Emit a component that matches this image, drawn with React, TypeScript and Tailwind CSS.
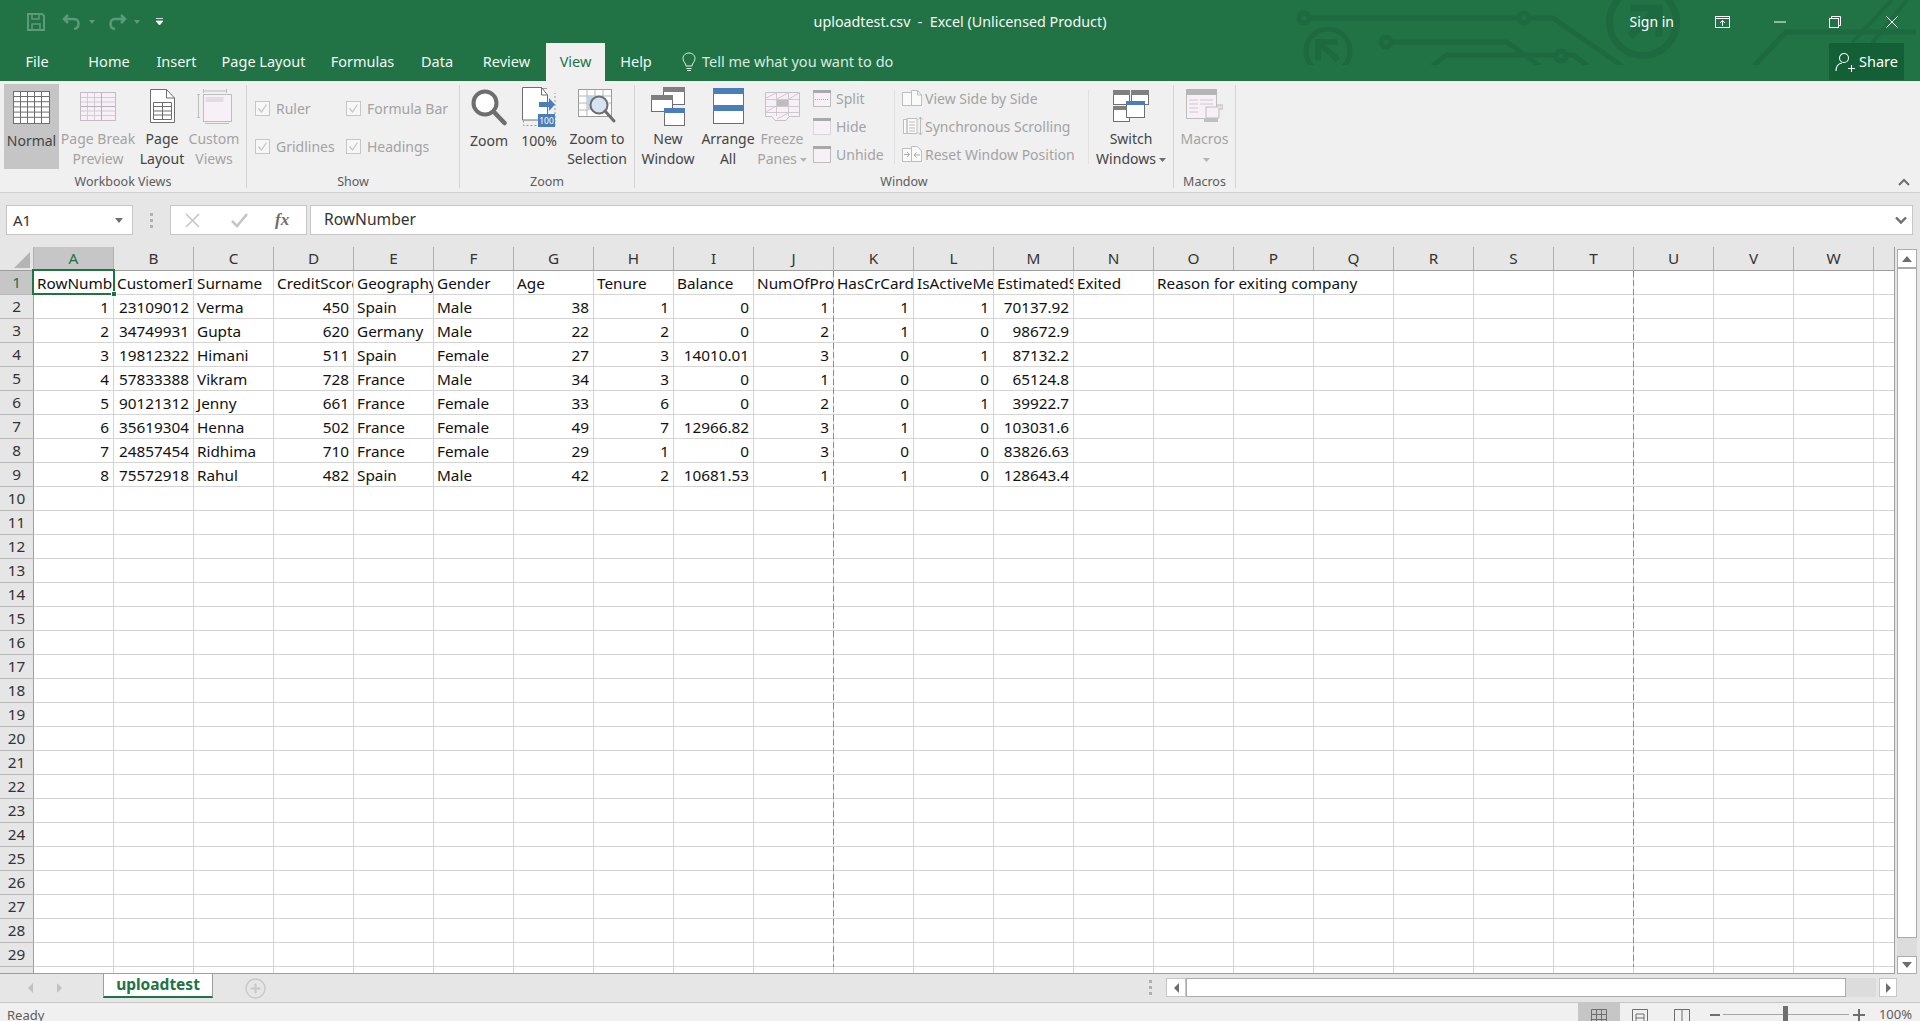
import React from 'react';

const G = '#6e6e6e';
const D = '#bdbdbd';
const BLUE = '#4a7ebb';

const Caret = ({ c = '#6e6e6e' }: { c?: string }) => (
  <svg width="7" height="4" viewBox="0 0 7 4" className="inline-block align-middle ml-[3px]"><path d="M0 0H7L3.5 4Z" fill={c} /></svg>
);

const range = (n: number) => Array.from({ length: n }, (_, i) => i);

const NormalIcon = () => (
  <svg width="37" height="33" viewBox="0 0 37 33">
    <rect x=".5" y=".5" width="36" height="32" fill="#fff" stroke={G} />
    {range(4).map(i => <path key={i} d={`M${7.5 + i * 7} 1V32`} stroke={G} />)}
    {range(5).map(i => <path key={i} d={`M1 ${5.5 + i * 5.2}H36`} stroke={G} />)}
  </svg>
);
const PageBreakIcon = () => (
  <svg width="36" height="29" viewBox="0 0 36 29">
    <rect x=".5" y=".5" width="35" height="28" fill="#f7f0f7" stroke="#c4bcc4" />
    {range(5).map(i => <path key={i} d={`M1 ${5.5 + i * 4.5}H35`} stroke="#d4ccd4" />)}
    {range(3).map(i => <path key={i} d={`M${7.5 + i * 7} 1V28`} stroke="#d4ccd4" />)}
    <path d="M21.5 1V28M1 14.5H35" stroke="#b8b0b8" />
  </svg>
);
const PageLayoutIcon = () => (
  <svg width="25" height="34" viewBox="0 0 25 34">
    <path d="M.5.5H16.5L24.5 9V33.5H.5Z" fill="#fff" stroke={G} />
    <path d="M16.5.5V9H24.5" fill="none" stroke={G} />
    <path d="M3.5 13.5H21.5V30.5H3.5ZM3.5 17.5H21.5M3.5 22H21.5M3.5 26H21.5M12.5 13.5V30.5" fill="none" stroke={G} />
  </svg>
);
const CustomViewsIcon = () => (
  <svg width="36" height="36" viewBox="0 0 36 36">
    <path d="M7.5 1V5M30.5 1V5M8 3H30M1 6.5H4M1 29.5H4M2.5 6.5V29.5" fill="none" stroke={D} />
    <rect x="7.5" y="6.5" width="28" height="27" fill="#f7f0f7" stroke={D} />
    <rect x="9.5" y="9" width="18" height="5" fill="#e2dde2" />
    <path d="M33 35.5H9" stroke={D} />
  </svg>
);
const ZoomIcon = () => (
  <svg width="36" height="37" viewBox="0 0 36 37">
    <circle cx="14" cy="14" r="11.5" fill="#fff" stroke={G} strokeWidth="4" />
    <path d="M23 23L33.5 34" stroke={G} strokeWidth="4.5" strokeLinecap="round" />
  </svg>
);
const HundredIcon = () => (
  <svg width="34" height="40" viewBox="0 0 34 40">
    <path d="M1.5 1.5V38.5H33V6" fill="none" stroke="#9a9a9a" strokeDasharray="2 2" />
    <path d="M1 1H25V2H1" fill="#9a9a9a" />
    <path d="M.5.5H19.5L25.5 8V33H.5Z" fill="#fff" stroke={G} />
    <path d="M19.5.5V8H25.5" fill="none" stroke={G} />
    <path d="M17 15H27V11L33 17.5L27 24V20H17Z" fill={BLUE} />
    <rect x="16" y="27" width="17" height="13" fill={BLUE} />
    <text x="24.5" y="37" textAnchor="middle" fontSize="8.5" fill="#fff" fontFamily="'Noto Sans', sans-serif">100</text>
  </svg>
);
const ZoomSelIcon = () => (
  <svg width="38" height="34" viewBox="0 0 38 34">
    <rect x=".5" y=".5" width="33" height="27" fill="#fff" stroke="#9a9a9a" />
    <path d="M.5 7H33M.5 14H33M.5 21H10M9 .5V27M17 .5V7M25 .5V7" stroke="#b5b5b5" />
    <rect x="9" y="7" width="17" height="14" fill="#bcd3ea" />
    <circle cx="21" cy="16" r="8.5" fill="#d6e4f2" stroke={G} strokeWidth="2" />
    <path d="M27 22L36 32" stroke={G} strokeWidth="3" strokeLinecap="round" />
  </svg>
);
const Win = ({ x, y, w, h, head, hh = 5 }: { x: number; y: number; w: number; h: number; head: string; hh?: number }) => (
  <g>
    <rect x={x + .5} y={y + .5} width={w} height={h} fill="#fff" stroke={G} />
    <rect x={x} y={y} width={w + 1} height={hh} fill={head} />
  </g>
);
const NewWindowIcon = () => (
  <svg width="35" height="39" viewBox="0 0 35 39">
    <Win x={12} y={0} w={21} h={17} head="#7f7f7f" />
    <Win x={0} y={8} w={21} h={16} head="#7f7f7f" />
    <Win x={13} y={21} w={20} h={17} head={BLUE} />
  </svg>
);
const ArrangeIcon = () => (
  <svg width="31" height="36" viewBox="0 0 31 36">
    <rect x=".5" y=".5" width="30" height="35" fill="#fff" stroke={G} />
    <rect width="31" height="6" fill={BLUE} />
    <rect y="17" width="31" height="6" fill={BLUE} />
  </svg>
);
const FreezeIcon = () => (
  <svg width="35" height="29" viewBox="0 0 35 29">
    <path d="M.5.5H34.5V24.5H24L21 28.5H10L7 24.5H.5Z" fill="#f7f0f7" stroke="#c8c0c8" />
    <rect x="12" y="8" width="11" height="6" fill="#bdbdbd" />
    <path d="M.5 7.5H34M.5 14.5H34M.5 20.5H34M11.5 1V24M23.5 1V24M1 6L11 1M12 7L23 1M24 7L34 1M1 20L11 14M12 27L23 21" fill="none" stroke="#cfc8cf" />
  </svg>
);
const SplitIcon = ({ kind }: { kind: 'split' | 'hide' | 'unhide' }) => (
  <svg width="18" height="17" viewBox="0 0 18 17">
    <rect x=".5" y=".5" width="17" height="16" fill="#f7f0f7" stroke={kind === 'hide' ? 'none' : D} />
    {kind === 'hide' && <rect x=".5" y=".5" width="17" height="16" fill="none" stroke={D} strokeDasharray="1 1" />}
    <rect width="18" height="3" fill="#a9a9a9" />
    {kind === 'split' && <path d="M2 9.5H16" stroke="#a9a9a9" strokeDasharray="1 1" />}
  </svg>
);
const SideIcon = () => (
  <svg width="20" height="16" viewBox="0 0 20 16">
    <path d="M.5 2.5H9.5V15.5H.5ZM9.5 15.5H19.5V5L15.5.5H9.5Z" fill="#fafafa" stroke={D} />
    <path d="M15.5.5V5H19.5" fill="none" stroke={D} />
  </svg>
);
const SyncIcon = () => (
  <svg width="22" height="20" viewBox="0 0 22 20">
    <path d="M1.5 3.5H5V17.5H1.5ZM5 2.5H15V17.5H5Z" fill="#fafafa" stroke={D} />
    <path d="M7 6H13M7 9H13M7 12H13M7 15H13" stroke={D} />
    <path d="M18.5 1V19M16.5 3.5L18.5 1L20.5 3.5M16.5 16.5L18.5 19L20.5 16.5" fill="none" stroke={D} />
  </svg>
);
const ResetIcon = () => (
  <svg width="20" height="16" viewBox="0 0 20 16">
    <path d="M.5 2.5H9.5V15.5H.5ZM9.5 15.5H19.5V5L15.5.5H9.5Z" fill="#fafafa" stroke={D} />
    <path d="M2 8.5H7M5 6L7.5 8.5L5 11M18 9H12M14.5 6.5L12 9L14.5 11.5" fill="none" stroke="#a9a9a9" />
  </svg>
);
const SwitchIcon = () => (
  <svg width="36" height="32" viewBox="0 0 36 32">
    <Win x={0} y={0} w={16} h={14} head="#7f7f7f" hh={5} />
    <Win x={18} y={0} w={17} h={14} head="#7f7f7f" hh={5} />
    <Win x={0} y={16} w={16} h={15} head="#7f7f7f" hh={4} />
    <Win x={13} y={11} w={18} h={16} head={BLUE} hh={4} />
  </svg>
);
const MacrosIcon = () => (
  <svg width="37" height="34" viewBox="0 0 37 34">
    <rect x=".5" y=".5" width="30" height="29" fill="#f7f0f7" stroke={D} />
    <rect width="31" height="6" fill="#b5b5b5" />
    <path d="M3 11H12M14 11H27M3 15H12M14 15H27M3 19H12M3 23H12" stroke="#cfc8cf" />
    <path d="M20 18H33V29H20Z" fill="#f7f0f7" stroke={D} />
    <path d="M18 29H32V33H18Z" fill="#c0c0c0" />
    <path d="M31 16H37V20H33" fill="#e6e0e6" stroke={D} />
  </svg>
);

const BigBtn = ({ w, icon, l1, l2, off, active }: { w: string; icon: React.ReactNode; l1: string; l2?: React.ReactNode; off?: boolean; active?: boolean }) => (
  <div className={`${w} h-[85px] flex flex-col items-center shrink-0 ${active ? 'bg-[#c5c5c5]' : ''} ${off ? 'text-[#a3a3a3]' : 'text-[#444444]'}`}>
    <div className="h-[46px] mb-[1px] flex items-center justify-center">{icon}</div>
    <div className="text-[14px] leading-[20px] whitespace-nowrap text-center">{l1}</div>
    <div className="text-[14px] leading-[20px] whitespace-nowrap text-center">{l2}</div>
  </div>
);

const Sep = () => <div className="w-px h-[103px] mt-[1px] bg-[#d4d4d4] shrink-0" />;

const Group = ({ w, label, children, pl }: { w: string; label: string; children: React.ReactNode; pl: string }) => (
  <div className={`${w} shrink-0 flex flex-col`}>
    <div className={`h-[89px] flex ${pl}`}>{children}</div>
    <div className="h-[20px] leading-[20px] text-[12.5px] text-center text-[#5c5c5c] whitespace-nowrap">{label}</div>
  </div>
);

const Check = ({ label }: { label: string }) => (
  <div className="flex items-center h-[38px]">
    <svg width="15" height="15" viewBox="0 0 15 15" className="shrink-0">
      <rect x=".5" y=".5" width="14" height="14" fill="#f7f7f7" stroke="#c6c6c6" />
      <path d="M3.5 7.5L6.5 11L11.5 3.5" fill="none" stroke="#c6c6c6" strokeWidth="1.3" />
    </svg>
    <span className="ml-[6px] text-[14px] text-[#a3a3a3] whitespace-nowrap">{label}</span>
  </div>
);

const Small = ({ icon, label, gap }: { icon: React.ReactNode; label: string; gap: string }) => (
  <div className="flex items-center h-[28px]">
    {icon}
    <span className={`${gap} text-[14px] text-[#a3a3a3] whitespace-nowrap`}>{label}</span>
  </div>
);

const TABS: [string, string][] = [
  ['File', 'w-[74px]'], ['Home', 'w-[70px]'], ['Insert', 'w-[65px]'], ['Page Layout', 'w-[109px]'],
  ['Formulas', 'w-[89px]'], ['Data', 'w-[60px]'], ['Review', 'w-[79px]'],
];

const Circuit = () => (
  <svg className="absolute left-0 top-0" width="1920" height="65" viewBox="0 0 1920 65" fill="none" stroke="#1e6a40" strokeWidth="5">
    <path d="M1309 18H1519M1529 18H1553L1622 66" />
    <circle cx="1304" cy="18" r="5" />
    <circle cx="1524" cy="18" r="5" />
    <path d="M1391 42H1507L1540 66" />
    <circle cx="1386" cy="42" r="5" />
    <path d="M1432 66L1447 55H1556M1566 55H1573L1588 66" />
    <circle cx="1561" cy="56" r="5" />
    <circle cx="1328" cy="51" r="22" />
    <path d="M1318 60V42H1338M1319 43L1338 60" strokeWidth="6" />
    <circle cx="1643" cy="22" r="33.5" strokeWidth="7" />
    <path d="M1630 8H1659V37" strokeWidth="7" />
    <path d="M1657 10L1630 36" strokeWidth="8" />
    <path d="M1754 66L1786 32H1916" />
    <path d="M1852 43L1892 0M1872 43L1907 0" strokeWidth="4" />
  </svg>
);

const HEAD = ['RowNumber', 'CustomerId', 'Surname', 'CreditScore', 'Geography', 'Gender', 'Age', 'Tenure', 'Balance', 'NumOfProducts', 'HasCrCard', 'IsActiveMember', 'EstimatedSalary', 'Exited', 'Reason for exiting company'];
type V = string | number;
const DATA: V[][] = [
  [1, 23109012, 'Verma', 450, 'Spain', 'Male', 38, 1, 0, 1, 1, 1, 70137.92],
  [2, 34749931, 'Gupta', 620, 'Germany', 'Male', 22, 2, 0, 2, 1, 0, 98672.9],
  [3, 19812322, 'Himani', 511, 'Spain', 'Female', 27, 3, 14010.01, 3, 0, 1, 87132.2],
  [4, 57833388, 'Vikram', 728, 'France', 'Male', 34, 3, 0, 1, 0, 0, 65124.8],
  [5, 90121312, 'Jenny', 661, 'France', 'Female', 33, 6, 0, 2, 0, 1, 39922.7],
  [6, 35619304, 'Henna', 502, 'France', 'Female', 49, 7, 12966.82, 3, 1, 0, 103031.6],
  [7, 24857454, 'Ridhima', 710, 'France', 'Female', 29, 1, 0, 3, 0, 0, 83826.63],
  [8, 75572918, 'Rahul', 482, 'Spain', 'Male', 42, 2, 10681.53, 1, 1, 0, 128643.4],
];
const COLS = 'ABCDEFGHIJKLMNOPQRSTUVW'.split('');

const Cell = ({ v, idx, head }: { v?: V; idx: number; head?: boolean }) => {
  const num = typeof v === 'number';
  const spill = head && idx === 14;
  const noBorder = head && (idx === 14 || idx === 15);
  return (
    <div className={`w-[80px] h-[24px] shrink-0 flex items-center pl-[3px] pr-[4px] pt-[1px] whitespace-nowrap text-[15.3px] text-[#111111] border-b border-[#d4d4d4] ${noBorder ? '' : 'border-r'} ${spill ? 'overflow-visible relative z-10' : 'overflow-hidden'} ${num ? 'justify-end' : 'justify-start'}`}>
      {v}
    </div>
  );
};

const Row = ({ n }: { n: number }) => {
  const vals: (V | undefined)[] = n === 1 ? HEAD : n <= 9 ? DATA[n - 2] : [];
  return (
    <div className="flex h-[24px] shrink-0">
      <div className={`w-[34px] h-[24px] shrink-0 flex items-center justify-center text-[15.3px] border-r border-b border-r-[#9e9e9e] border-b-[#b8b8b8] ${n === 1 ? 'bg-[#c6c6c6] text-[#217346]' : 'bg-[#e6e6e6] text-[#333333]'}`}>{n <= 29 ? n : ''}</div>
      {COLS.map((_, i) => <Cell key={i} idx={i} v={vals[i]} head={n === 1} />)}
      <div className="flex-1 h-[24px] border-b border-[#d4d4d4]" />
    </div>
  );
};

const DASH = 'absolute top-[24px] bottom-[6px] w-px bg-[repeating-linear-gradient(to_bottom,#8c8c8c_0,#8c8c8c_6px,transparent_6px,transparent_9px)]';

export default function App() {
  return (
    <div className="w-[1920px] h-[1021px] overflow-hidden flex flex-col bg-[#f0f0f0] font-['Noto_Sans',sans-serif]">
      {/* Green header */}
      <div className="relative h-[81px] shrink-0 bg-[#217346] flex flex-col">
        <Circuit />
        <div className="relative h-[43px] grid grid-cols-[1fr_auto_1fr] items-center text-white">
          <div className="flex items-center pl-[27px]">
            <svg width="18" height="18" viewBox="0 0 18 18" fill="none" stroke="#5d9a78" strokeWidth="2"><path d="M1 1H15L17 3V17H1Z" /><path d="M5 2V6H12V2M5 17V11H13V17" strokeWidth="1.5" /></svg>
            <svg className="ml-[17px]" width="20" height="16" viewBox="0 0 20 16" fill="none" stroke="#5d9a78" strokeWidth="2.5"><path d="M6 1L2 5L6 9M2 5H12C18 5 18 14 12 15" /></svg>
            <svg className="ml-[7px]" width="6" height="4" viewBox="0 0 6 4"><path d="M0 0H6L3 4Z" fill="#5d9a78" /></svg>
            <svg className="ml-[12px]" width="20" height="16" viewBox="0 0 20 16" fill="none" stroke="#5d9a78" strokeWidth="2.5"><path d="M14 1L18 5L14 9M18 5H8C2 5 2 14 8 15" /></svg>
            <svg className="ml-[7px]" width="6" height="4" viewBox="0 0 6 4"><path d="M0 0H6L3 4Z" fill="#5d9a78" /></svg>
            <svg className="ml-[16px]" width="7" height="8" viewBox="0 0 7 8"><path d="M0 .5H7M0 3H7L3.5 7Z" stroke="#fff" strokeWidth=".8" fill="#fff" /></svg>
          </div>
          <div className="text-[14.3px] whitespace-pre text-[#f4f8f5]">uploadtest.csv  -  Excel (Unlicensed Product)</div>
          <div className="flex items-center justify-end pr-[22px]">
            <span className="text-[14px] mr-[41px]">Sign in</span>
            <svg className="mr-[44px]" width="15" height="12" viewBox="0 0 15 12" fill="none" stroke="#fff"><rect x=".5" y=".5" width="14" height="11" /><path d="M1 2.5H14M7.5 10V4.5M5 7L7.5 4.5L10 7" /></svg>
            <svg className="mr-[43px]" width="12" height="2" viewBox="0 0 12 2"><path d="M0 1H12" stroke="#fff" /></svg>
            <svg className="mr-[45px]" width="12" height="12" viewBox="0 0 12 12" fill="none" stroke="#fff"><rect x=".5" y="2.5" width="9" height="9" /><path d="M2.5 2.5V.5H11.5V9.5H9.5" /></svg>
            <svg width="12" height="12" viewBox="0 0 12 12" fill="none" stroke="#fff"><path d="M.5.5L11.5 11.5M11.5.5L.5 11.5" /></svg>
          </div>
        </div>
        <div className="relative h-[38px] flex text-[14.5px] text-[#f2f7f4]">
          {TABS.map(([t, w]) => <div key={t} className={`${w} h-full flex items-center justify-center whitespace-nowrap`}>{t}</div>)}
          <div className="w-[59px] h-full bg-[#f0f0f0] text-[#217346] flex items-center justify-center">View</div>
          <div className="w-[62px] h-full flex items-center justify-center">Help</div>
          <div className="flex items-center ml-[15px] text-[#dbe8e0]">
            <svg width="14" height="20" viewBox="0 0 14 20" fill="none" stroke="#e6efe9"><path d="M4 14C4 11 1 10 1 6.5C1 3 4 1 7 1C10 1 13 3 13 6.5C13 10 10 11 10 14ZM4.500 16.500H9.500M5 18.500H9" /></svg>
            <span className="ml-[6px] text-[14.5px] whitespace-nowrap">Tell me what you want to do</span>
          </div>
          <div className="ml-auto mr-[16px] w-[75px] h-[37px] bg-[#135f36] flex items-center justify-center text-white">
            <svg width="20" height="20" viewBox="0 0 20 20" fill="none" stroke="#fff" strokeWidth="1.1"><circle cx="9" cy="6" r="4.5" /><path d="M1 19C1 14 4 11.5 7 11M13 16.5H20M16.5 13V20" /></svg>
            <span className="ml-[4px] text-[14.5px]">Share</span>
          </div>
        </div>
      </div>

      {/* Ribbon */}
      <div className="h-[112px] shrink-0 bg-[#f0f0f0] border-b border-[#d0d0d0] flex pt-[3px]">
        <Group w="w-[246px]" pl="pl-[4px]" label="Workbook Views">
          <BigBtn w="w-[55px]" active icon={<NormalIcon />} l1="Normal" />
          <BigBtn w="w-[78px]" off icon={<PageBreakIcon />} l1="Page Break" l2="Preview" />
          <BigBtn w="w-[50px]" icon={<PageLayoutIcon />} l1="Page" l2="Layout" />
          <BigBtn w="w-[54px]" off icon={<CustomViewsIcon />} l1="Custom" l2="Views" />
        </Group>
        <Sep />
        <Group w="w-[212px]" pl="pl-[8px] pt-[5px]" label="Show">
          <div className="w-[91px]"><Check label="Ruler" /><Check label="Gridlines" /></div>
          <div><Check label="Formula Bar" /><Check label="Headings" /></div>
        </Group>
        <Sep />
        <Group w="w-[174px]" pl="pl-[4px]" label="Zoom">
          <BigBtn w="w-[50px]" icon={<ZoomIcon />} l1="Zoom" />
          <BigBtn w="w-[50px]" icon={<HundredIcon />} l1="100%" />
          <BigBtn w="w-[66px]" icon={<ZoomSelIcon />} l1="Zoom to" l2="Selection" />
        </Group>
        <Sep />
        <Group w="w-[538px]" pl="pl-[5px]" label="Window">
          <BigBtn w="w-[56px]" icon={<NewWindowIcon />} l1="New" l2="Window" />
          <BigBtn w="w-[64px]" icon={<ArrangeIcon />} l1="Arrange" l2="All" />
          <BigBtn w="w-[44px]" off icon={<FreezeIcon />} l1="Freeze" l2={<>Panes<Caret c="#b5b5b5" /></>} />
          <div className="w-[90px] pl-[9px] shrink-0">
            <Small icon={<SplitIcon kind="split" />} label="Split" gap="ml-[5px]" />
            <Small icon={<SplitIcon kind="hide" />} label="Hide" gap="ml-[5px]" />
            <Small icon={<SplitIcon kind="unhide" />} label="Unhide" gap="ml-[5px]" />
          </div>
          <div className="w-px h-[74px] mt-[6px] bg-[#e0e0e0] shrink-0" />
          <div className="w-[193px] pl-[7px] shrink-0">
            <Small icon={<SideIcon />} label="View Side by Side" gap="ml-[3px]" />
            <Small icon={<SyncIcon />} label="Synchronous Scrolling" gap="ml-[1px]" />
            <Small icon={<ResetIcon />} label="Reset Window Position" gap="ml-[3px]" />
          </div>
          <div className="w-px h-[74px] mt-[6px] bg-[#e0e0e0] shrink-0" />
          <BigBtn w="w-[84px]" icon={<SwitchIcon />} l1="Switch" l2={<>Windows<Caret /></>} />
        </Group>
        <Sep />
        <Group w="w-[61px]" pl="" label="Macros">
          <BigBtn w="w-[61px]" off icon={<MacrosIcon />} l1="Macros" l2={<Caret c="#b5b5b5" />} />
        </Group>
        <Sep />
        <div className="ml-auto self-end mr-[10px] mb-[6px]">
          <svg width="12" height="8" viewBox="0 0 12 8" fill="none" stroke="#6e6e6e" strokeWidth="2"><path d="M1 7L6 2L11 7" /></svg>
        </div>
      </div>

      {/* Formula bar */}
      <div className="h-[54px] shrink-0 bg-[#e6e6e6] flex items-start pt-[12px] pl-[6px] pr-[7px]">
        <div className="w-[127px] h-[30px] bg-white border border-[#c6c6c6] flex items-center justify-between pl-[6px] pr-[9px] text-[15px] text-[#333333]">
          <span>A1</span>
          <svg width="8" height="5" viewBox="0 0 8 5"><path d="M0 0H8L4 5Z" fill="#6e6e6e" /></svg>
        </div>
        <div className="w-[37px] h-[30px] flex flex-col items-center justify-center gap-[3px]">
          <span className="w-[3px] h-[3px] bg-[#b0b0b0]" /><span className="w-[3px] h-[3px] bg-[#b0b0b0]" /><span className="w-[3px] h-[3px] bg-[#b0b0b0]" />
        </div>
        <div className="w-[137px] h-[30px] bg-white border border-[#c6c6c6] flex items-center pl-[14px]">
          <svg width="15" height="15" viewBox="0 0 15 15" fill="none" stroke="#c6c6c6" strokeWidth="1.6"><path d="M1 1L14 14M14 1L1 14" /></svg>
          <svg className="ml-[31px]" width="17" height="15" viewBox="0 0 17 15" fill="none" stroke="#c6c6c6" strokeWidth="2.6"><path d="M1 8L6 13L16 1" /></svg>
          <span className="ml-[27px] text-[17px] font-['Liberation_Serif',serif] italic font-bold text-[#6e6e6e]">fx</span>
        </div>
        <div className="ml-[3px] flex-1 h-[30px] bg-white border border-[#c6c6c6] flex items-center justify-between pl-[13px] pr-[5px] text-[15.6px] text-[#333333]">
          <span>RowNumber</span>
          <svg width="12" height="9" viewBox="0 0 12 9" fill="none" stroke="#6e6e6e" strokeWidth="2.4"><path d="M1 1.5L6 6.5L11 1.5" /></svg>
        </div>
      </div>

      {/* Sheet + vertical scrollbar */}
      <div className="h-[727px] shrink-0 flex bg-[#e6e6e6]">
        <div className="relative w-[1895px] h-full bg-white border-r border-b border-[#9e9e9e] overflow-hidden flex flex-col">
          <div className="flex h-[24px] shrink-0 bg-[#e6e6e6] border-b border-[#9e9e9e]">
            <div className="w-[34px] shrink-0 flex items-end justify-end pr-[3px] pb-[2px] border-r border-[#b0b0b0]">
              <svg width="16" height="16" viewBox="0 0 16 16"><path d="M16 0V16H0Z" fill="#b4b4b4" /></svg>
            </div>
            {COLS.map((c, i) => (
              <div key={c} className={`w-[80px] shrink-0 flex items-center justify-center text-[15.3px] border-r border-[#b0b0b0] ${i === 0 ? 'bg-[#c6c6c6] text-[#217346]' : 'text-[#333333]'}`}>{c}</div>
            ))}
          </div>
          {range(30).map(i => <Row key={i} n={i + 1} />)}
          <div className={`${DASH} left-[833px]`} />
          <div className={`${DASH} left-[1633px]`} />
          <div className="absolute left-[32px] top-[22px] w-[83px] h-[26px] border-2 border-[#217346] z-20" />
          <div className="absolute left-[111px] top-[44px] w-[6px] h-[6px] bg-[#217346] border border-white z-30" />
        </div>
        <div className="flex-1 flex flex-col pl-[2px] pr-[3px] pt-[2px]">
          <div className="h-[19px] shrink-0 bg-white border border-[#ababab] flex items-center justify-center">
            <svg width="10" height="6" viewBox="0 0 10 6"><path d="M5 0L10 6H0Z" fill="#6e6e6e" /></svg>
          </div>
          <div className="h-[670px] shrink-0 bg-white border border-[#ababab]" />
          <div className="flex-1 bg-[#dcdcdc]" />
          <div className="h-[18px] shrink-0 bg-white border border-[#ababab] flex items-center justify-center">
            <svg width="10" height="6" viewBox="0 0 10 6"><path d="M0 0H10L5 6Z" fill="#6e6e6e" /></svg>
          </div>
        </div>
      </div>

      {/* Sheet tabs + horizontal scrollbar */}
      <div className="h-[29px] shrink-0 bg-[#e6e6e6] border-b border-[#c6c6c6] flex">
        <div className="w-[103px] shrink-0 flex items-center pl-[28px] pb-[1px]">
          <svg width="5" height="10" viewBox="0 0 5 10"><path d="M5 0V10L0 5Z" fill="#c0c0c0" /></svg>
          <svg className="ml-[24px]" width="5" height="10" viewBox="0 0 5 10"><path d="M0 0V10L5 5Z" fill="#c0c0c0" /></svg>
        </div>
        <div className="w-[110px] h-[25px] -mt-px shrink-0 bg-white border-x border-[#9e9e9e] border-b-2 border-b-[#217346] flex items-center justify-center text-[15.5px] font-bold text-[#217346]">uploadtest</div>
        <div className="ml-[32px] mt-[4px]">
          <svg width="21" height="21" viewBox="0 0 21 21" fill="none" stroke="#c8c8c8" strokeWidth="1.4"><circle cx="10.5" cy="10.5" r="9.5" /><path d="M10.5 5.5V15.5M5.5 10.5H15.5" strokeWidth="2" /></svg>
        </div>
        <div className="ml-auto flex items-start pt-[4px] pr-[23px]">
          <div className="flex flex-col gap-[3px] mr-[14px] mt-[2px]">
            <span className="w-[3px] h-[3px] bg-[#b0b0b0]" /><span className="w-[3px] h-[3px] bg-[#b0b0b0]" /><span className="w-[3px] h-[3px] bg-[#b0b0b0]" />
          </div>
          <div className="w-[20px] h-[19px] bg-white border border-[#c6c6c6] flex items-center justify-center">
            <svg width="5" height="10" viewBox="0 0 5 10"><path d="M5 0V10L0 5Z" fill="#6e6e6e" /></svg>
          </div>
          <div className="w-[660px] h-[19px] bg-white border border-[#ababab]" />
          <div className="w-[30px] h-[19px] bg-[#dcdcdc]" />
          <div className="ml-[3px] w-[18px] h-[19px] bg-white border border-[#c6c6c6] flex items-center justify-center">
            <svg width="5" height="10" viewBox="0 0 5 10"><path d="M0 0V10L5 5Z" fill="#6e6e6e" /></svg>
          </div>
        </div>
      </div>

      {/* Status bar */}
      <div className="h-[30px] shrink-0 bg-[#f0f0f0] flex items-start text-[13px] text-[#5c5c5c]">
        <span className="ml-[7px] mt-[3px]">Ready</span>
        <div className="ml-auto flex items-start pr-[8px]">
          <div className="w-[42px] h-[30px] bg-[#c6c6c6] flex justify-center pt-[6px]">
            <svg width="16" height="18" viewBox="0 0 16 18" fill="none" stroke="#6e6e6e"><path d="M.5.5H15.5V18M.5.5V18M5.5.5V18M10.5.5V18M.5 5.5H15.5M.5 10.5H15.5M.5 15.5H15.5" /></svg>
          </div>
          <div className="w-[41px] flex justify-center pt-[6px]">
            <svg width="16" height="18" viewBox="0 0 16 18" fill="none" stroke="#6e6e6e"><path d="M.5.5H15.5V18M.5.5V18M4 5H12V18M4 5V18M4 9H12M4 13H12" /></svg>
          </div>
          <div className="w-[43px] flex justify-center pt-[6px]">
            <svg width="16" height="18" viewBox="0 0 16 18" fill="none" stroke="#6e6e6e"><path d="M.5.5H15.5V14H.5ZM8 .5V14" /></svg>
          </div>
          <div className="flex items-center h-[23px] ml-[6px]">
            <span className="w-[10px] h-[2px] bg-[#6e6e6e]" />
            <div className="ml-[3px] w-[126px] h-px bg-[#a6a6a6] relative">
              <span className="absolute left-[60px] -top-[8px] w-[5px] h-[18px] bg-[#6e6e6e]" />
            </div>
            <svg className="ml-[4px]" width="12" height="12" viewBox="0 0 12 12"><path d="M6 0V12M0 6H12" stroke="#6e6e6e" strokeWidth="2" /></svg>
            <span className="ml-[14px] text-[13px]">100%</span>
          </div>
        </div>
      </div>
    </div>
  );
}
